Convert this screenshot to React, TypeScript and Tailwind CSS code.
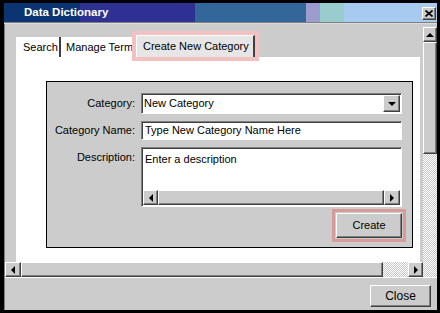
import React from 'react';

const raised =
  'bg-[#cccccc] border border-t-white border-l-white border-r-[#404040] border-b-[#404040] shadow-[inset_-1px_-1px_#808080]';
const sunken =
  'bg-white border border-t-[#808080] border-l-[#808080] border-r-white border-b-white shadow-[inset_1px_1px_#404040]';
const dither =
  'bg-[repeating-conic-gradient(#ffffff_0_25%,#c8c8c8_0_50%)] bg-[length:2px_2px]';

const Arrow: React.FC<{ dir: 'up' | 'down' | 'left' | 'right' }> = ({ dir }) => {
  const pts = {
    up: '0,4 4,0 8,4',
    down: '0,0 8,0 4,4',
    left: '4,0 4,8 0,4',
    right: '0,0 0,8 4,4',
  }[dir];
  const w = dir === 'up' || dir === 'down' ? 8 : 4;
  const h = dir === 'up' || dir === 'down' ? 4 : 8;
  return (
    <svg width={w} height={h} viewBox={`0 0 ${w} ${h}`}>
      <polygon points={pts} fill="#000" />
    </svg>
  );
};

export default function App() {
  return (
    <div
      className="w-[440px] h-[313px] bg-black pl-[4px] pr-[3px] pt-[3px] pb-[3px] flex flex-col text-[11px] text-black whitespace-nowrap"
      style={{ fontFamily: '"Liberation Sans", Arial, sans-serif' }}
    >
      {/* title bar */}
      <div className="relative h-[19px] flex shrink-0">
        <div className="w-[76px] bg-[#0b3470]" />
        <div className="w-[115px] bg-[#2f3192]" />
        <div className="w-[111px] bg-[#336699]" />
        <div className="w-[14px] bg-[#9c9ccf]" />
        <div className="w-[24px] bg-[#99cccc]" />
        <div className="flex-1 bg-[#a6caf0]" />
        <span className="absolute left-[20px] top-[3px] font-bold text-white text-[11.5px] leading-[13px]">
          Data Dictionary
        </span>
        <div className={`absolute right-[1px] top-[4px] w-[14px] h-[13px] flex items-center justify-center ${raised}`}>
          <svg width="8" height="7" viewBox="0 0 8 7">
            <path d="M0.5 0.5 L7.5 6.5 M7.5 0.5 L0.5 6.5" stroke="#000" strokeWidth="1.6" />
          </svg>
        </div>
      </div>
      <div className="h-px bg-[#808080] shrink-0" />
      <div className="h-px bg-[#dcdcdc] shrink-0" />

      {/* body */}
      <div className="flex-1 flex flex-col bg-[#cccccc] border-l border-[#808080]">
        <div className="flex h-[238px]">
          {/* content column */}
          <div className="flex-1 flex flex-col pt-[9px] pr-[3px]">
            <div className="flex items-end pl-[11px] h-[24px]">
              <div className="h-[20px] w-[45px] bg-white border-r-2 border-[#404040] flex items-center pl-[7px]">
                Search
              </div>
              <div className="h-[20px] w-[71px] bg-white flex items-center pl-[5px]">Manage Term</div>
              <div className="w-[4px]" />
              <div className="relative z-10 h-[22px] w-[119px] bg-[#e6e6e6] border-l border-t border-white border-r-2 border-r-[#404040] flex items-center pl-[6px] outline-4 outline-[#f2c2c2]">
                Create New Category
              </div>
            </div>
            <div className="flex-1 bg-white ml-[11px] pl-[30px] pr-[7px] pt-[24px] pb-[14px] flex">
              <div className="flex-1 border border-black bg-[#cccccc] pt-[11px] pr-[10px] flex flex-col gap-[7px]">
                <div className="flex items-center">
                  <div className="w-[89px] text-right pr-[1px]">Category:</div>
                  <div className={`ml-[5px] flex-1 h-[21px] flex items-center pl-[2px] pr-[1px] ${sunken}`}>
                    <span className="flex-1">New Category</span>
                    <div className={`w-[17px] h-[17px] flex items-center justify-center ${raised}`}>
                      <Arrow dir="down" />
                    </div>
                  </div>
                </div>
                <div className="flex items-center">
                  <div className="w-[89px] text-right pr-[1px]">Category Name:</div>
                  <div className={`ml-[5px] flex-1 h-[19px] flex items-center pl-[3px] ${sunken}`}>
                    Type New Category Name Here
                  </div>
                </div>
                <div className="flex items-start">
                  <div className="w-[89px] text-right pr-[1px] pt-[2px]">Description:</div>
                  <div className={`ml-[5px] flex-1 h-[60px] flex flex-col ${sunken}`}>
                    <div className="flex-1 pl-[3px] pt-[3px]">Enter a description</div>
                    <div className="h-[15px] flex mx-[1px] mb-[1px]">
                      <div className={`w-[15px] flex items-center justify-center ${raised}`}>
                        <Arrow dir="left" />
                      </div>
                      <div className={`flex-1 ${raised}`} />
                      <div className={`w-[16px] flex items-center justify-center ${raised}`}>
                        <Arrow dir="right" />
                      </div>
                    </div>
                  </div>
                </div>
                <div className="flex justify-end -mt-[1px]">
                  <div
                    className={`w-[66px] h-[25px] flex items-center justify-center outline-[3px] outline-[#d99a9a] outline-offset-[1px] ${raised}`}
                  >
                    Create
                  </div>
                </div>
              </div>
            </div>
          </div>
          {/* vertical scrollbar */}
          <div className="w-[14px] flex flex-col pt-[3px]">
            <div className={`h-[15px] flex items-center justify-center ${raised}`}>
              <Arrow dir="up" />
            </div>
            <div className={`h-[112px] ${raised}`} />
            <div className={`flex-1 ${dither}`} />
          </div>
        </div>

        {/* horizontal scrollbar */}
        <div className="h-[15px] flex">
          <div className={`w-[16px] flex items-center justify-center ${raised}`}>
            <Arrow dir="left" />
          </div>
          <div className={`w-[362px] ${raised}`} />
          <div className={`flex-1 ${dither}`} />
          <div className={`w-[15px] flex items-center justify-center ${raised}`}>
            <Arrow dir="right" />
          </div>
          <div className={`w-[14px] ${dither}`} />
        </div>

        {/* footer */}
        <div className="flex-1 border-t border-white flex justify-end items-start pt-[7px] pr-[6px]">
          <div className={`w-[61px] h-[22px] flex items-center justify-center text-[12px] ${raised}`}>Close</div>
        </div>
      </div>
    </div>
  );
}
